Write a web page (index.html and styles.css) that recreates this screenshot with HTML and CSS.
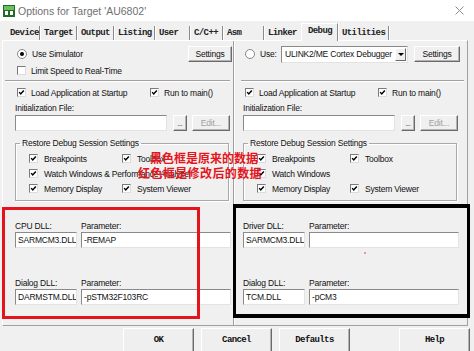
FILE: index.html
```html
<!DOCTYPE html>
<html lang="en">
<head>
    <meta charset="UTF-8">
    <title>Options for Target 'AU6802'</title>
    <link rel="stylesheet" href="styles.css">
</head>
<body>
    <div class="dialog">
        <div class="titlebar">
            <svg class="app-icon" viewBox="0 0 12 12">
                <rect width="12" height="12" fill="#1f6b2a"/>
                <rect x="1" y="1" width="10" height="4" fill="#6cbf5a"/>
                <rect x="2" y="6" width="3" height="4" fill="#fff"/>
                <rect x="7" y="6" width="3" height="4" fill="#fff"/>
            </svg>
            <span class="title">Options for Target 'AU6802'</span>
            <svg class="close" viewBox="0 0 9 9">
                <path d="M0.5 0.5 L8.5 8.5 M8.5 0.5 L0.5 8.5" stroke="#8c8c8c" stroke-width="1" fill="none"/>
            </svg>
        </div>

        <div class="tabs">
            <span class="tab">Device</span>
            <span class="tab">Target</span>
            <span class="tab">Output</span>
            <span class="tab">Listing</span>
            <span class="tab">User</span>
            <span class="tab">C/C++</span>
            <span class="tab">Asm</span>
            <span class="tab tab-before">Linker</span>
            <span class="tab tab-active">Debug</span>
            <span class="tab">Utilities</span>
        </div>

        <div class="panel">
            <div class="col col-left">
                <div class="row row-top">
                    <span class="opt"><span class="radio on"></span>Use Simulator</span>
                    <span class="btn btn-settings">Settings</span>
                </div>
                <div class="row">
                    <span class="opt"><span class="cb"></span>Limit Speed to Real-Time</span>
                </div>
                <div class="sep"></div>
                <div class="row pair">
                    <span class="opt"><span class="cb"><svg viewBox="0 0 9 9"><path d="M1.5 4 L3.5 6.3 L7.5 1.8"/></svg></span>Load Application at Startup</span>
                    <span class="opt"><span class="cb"><svg viewBox="0 0 9 9"><path d="M1.5 4 L3.5 6.3 L7.5 1.8"/></svg></span>Run to main()</span>
                </div>
                <div class="row">Initialization File:</div>
                <div class="file-row">
                    <span class="field file"></span>
                    <span class="btn btn-dots">...</span>
                    <span class="btn btn-edit">Edit...</span>
                </div>
                <fieldset class="group">
                    <legend>Restore Debug Session Settings</legend>
                    <div class="group-grid">
                        <span class="opt"><span class="cb"><svg viewBox="0 0 9 9"><path d="M1.5 4 L3.5 6.3 L7.5 1.8"/></svg></span>Breakpoints</span>
                        <span class="opt"><span class="cb"><svg viewBox="0 0 9 9"><path d="M1.5 4 L3.5 6.3 L7.5 1.8"/></svg></span>Toolbox</span>
                        <span class="opt wide"><span class="cb"><svg viewBox="0 0 9 9"><path d="M1.5 4 L3.5 6.3 L7.5 1.8"/></svg></span>Watch Windows &amp; Performance Analyzer</span>
                        <span class="opt"><span class="cb"><svg viewBox="0 0 9 9"><path d="M1.5 4 L3.5 6.3 L7.5 1.8"/></svg></span>Memory Display</span>
                        <span class="opt"><span class="cb"><svg viewBox="0 0 9 9"><path d="M1.5 4 L3.5 6.3 L7.5 1.8"/></svg></span>System Viewer</span>
                    </div>
                </fieldset>
                <div class="dll">
                    <span>CPU DLL:</span><span>Parameter:</span>
                    <span class="field">SARMCM3.DLL</span><span class="field">-REMAP</span>
                </div>
                <div class="dll dll-dialog">
                    <span>Dialog DLL:</span><span>Parameter:</span>
                    <span class="field">DARMSTM.DLL</span><span class="field">-pSTM32F103RC</span>
                </div>
            </div>

            <div class="col col-right">
                <div class="row row-top">
                    <span class="opt"><span class="radio"></span>Use:</span>
                    <span class="combo">ULINK2/ME Cortex Debugger<span class="combo-arrow"></span></span>
                    <span class="btn btn-settings">Settings</span>
                </div>
                <div class="row"></div>
                <div class="sep"></div>
                <div class="row pair">
                    <span class="opt"><span class="cb"><svg viewBox="0 0 9 9"><path d="M1.5 4 L3.5 6.3 L7.5 1.8"/></svg></span>Load Application at Startup</span>
                    <span class="opt"><span class="cb"><svg viewBox="0 0 9 9"><path d="M1.5 4 L3.5 6.3 L7.5 1.8"/></svg></span>Run to main()</span>
                </div>
                <div class="row">Initialization File:</div>
                <div class="file-row">
                    <span class="field file"></span>
                    <span class="btn btn-dots">...</span>
                    <span class="btn btn-edit">Edit...</span>
                </div>
                <fieldset class="group">
                    <legend>Restore Debug Session Settings</legend>
                    <div class="group-grid">
                        <span class="opt"><span class="cb"><svg viewBox="0 0 9 9"><path d="M1.5 4 L3.5 6.3 L7.5 1.8"/></svg></span>Breakpoints</span>
                        <span class="opt"><span class="cb"><svg viewBox="0 0 9 9"><path d="M1.5 4 L3.5 6.3 L7.5 1.8"/></svg></span>Toolbox</span>
                        <span class="opt wide"><span class="cb"><svg viewBox="0 0 9 9"><path d="M1.5 4 L3.5 6.3 L7.5 1.8"/></svg></span>Watch Windows</span>
                        <span class="opt"><span class="cb"><svg viewBox="0 0 9 9"><path d="M1.5 4 L3.5 6.3 L7.5 1.8"/></svg></span>Memory Display</span>
                        <span class="opt"><span class="cb"><svg viewBox="0 0 9 9"><path d="M1.5 4 L3.5 6.3 L7.5 1.8"/></svg></span>System Viewer</span>
                    </div>
                </fieldset>
                <div class="dll">
                    <span>Driver DLL:</span><span>Parameter:</span>
                    <span class="field">SARMCM3.DLL</span><span class="field"></span>
                </div>
                <div class="dll dll-dialog">
                    <span>Dialog DLL:</span><span>Parameter:</span>
                    <span class="field">TCM.DLL</span><span class="field">-pCM3</span>
                </div>
            </div>
        </div>

        <div class="buttons">
            <span class="btn-main">OK</span>
            <span class="btn-main">Cancel</span>
            <span class="btn-main">Defaults</span>
            <span class="btn-main btn-help">Help</span>
        </div>

        <!-- annotations drawn over the dialog -->
        <div class="mark mark-red"></div>
        <div class="mark mark-black"></div>
        <span class="note note-black">黑色框是原来的数据</span>
        <span class="note note-red">红色框是修改后的数据</span>
        <span class="dot"></span>
    </div>
</body>
</html>
```

FILE: styles.css
```css
* {
    box-sizing: border-box;
}
body {
    margin: 0;
    width: 474px;
    height: 351px;
    overflow: hidden;
    background-color: #f0f0f0;
    font-family: "Liberation Sans", Arial, sans-serif;
    font-size: 8.5px;
    letter-spacing: -0.2px;
    color: #111;
}
.dialog {
    position: relative;
    width: 474px;
    height: 351px;
}

/* title bar */
.titlebar {
    height: 21px;
    background-color: #fff;
    display: flex;
    align-items: center;
    padding: 0 10px 0 3px;
}
.app-icon {
    width: 12px;
    height: 12px;
    margin-right: 3px;
}
.title {
    flex: 1;
    font-size: 10.5px;
    letter-spacing: 0;
    color: #707070;
}
.close {
    width: 9px;
    height: 9px;
}

/* tab strip */
.tabs {
    display: grid;
    grid-template-columns: 34px 37px 37px 41px 35px 33px 41px 37px 37px 51px;
    align-items: end;
    height: 19px;
    padding-left: 6px;
    font-family: "Liberation Mono", monospace;
    font-size: 9px;
    font-weight: bold;
    letter-spacing: -0.6px;
    color: #222;
}
.tab {
    height: 14px;
    line-height: 14px;
    padding-left: 4px;
    border-right: 1px solid #8a8a8a;
    box-shadow: 1px 0 0 #fff;
    white-space: nowrap;
}
.tab-before {
    border-right: none;
    box-shadow: none;
}
.tab-active {
    height: 18px;
    line-height: 14px;
    padding-left: 6px;
    margin-bottom: -1px;
    background-color: #f0f0f0;
    border-left: 1px solid #fff;
    border-top: 1px solid #fff;
}

/* main page of the tab */
.panel {
    display: flex;
    height: 286px;
    margin: 0 6px 0 2px;
    border-top: 1px solid #fff;
    border-left: 1px solid #fff;
    border-right: 1px solid #a0a0a0;
    border-bottom: 1px solid #a0a0a0;
}
.col {
    display: flex;
    flex-direction: column;
    padding-top: 4px;
}
.col-left {
    width: 231px;
    padding-left: 12px;
    padding-right: 1px;
    border-right: 1px solid #a0a0a0;
    box-shadow: 1px 0 0 #fff;
}
.col-right {
    flex: 1;
    padding-left: 9px;
    padding-right: 7px;
}
.row {
    height: 15px;
    display: flex;
    align-items: center;
    white-space: nowrap;
}
.row-top {
    height: 18px;
    justify-content: space-between;
}
.pair {
    display: grid;
    grid-template-columns: 133px 1fr;
    margin-top: 3px;
}
.opt {
    display: flex;
    align-items: center;
    white-space: nowrap;
}
.sep {
    height: 2px;
    margin: 2px 2px 0 -10px;
    border-top: 1px solid #a0a0a0;
    border-bottom: 1px solid #fff;
}
.col-right .sep {
    margin: 2px -4px 0 -2px;
}

/* check boxes and radios */
.cb {
    width: 9px;
    height: 9px;
    margin: 0 5px 0 2px;
    background-color: #fff;
    border: 1px solid;
    border-color: #7a7a7a #dcdcdc #dcdcdc #7a7a7a;
    display: flex;
}
.cb svg {
    width: 7px;
    height: 7px;
}
.cb path {
    fill: none;
    stroke: #000;
    stroke-width: 1.9;
}
.radio {
    width: 10px;
    height: 10px;
    margin: 0 5px 0 2px;
    border-radius: 50%;
    background-color: #fff;
    border: 1px solid #8a8a8a;
    display: flex;
    align-items: center;
    justify-content: center;
}
.radio.on::after {
    content: '';
    width: 4px;
    height: 4px;
    border-radius: 50%;
    background-color: #000;
}

/* buttons and fields */
.btn {
    height: 16px;
    display: flex;
    align-items: center;
    justify-content: center;
    background-color: #f0f0f0;
    border: 1px solid;
    border-color: #fff #6a6a6a #6a6a6a #fff;
    box-shadow: inset -1px -1px 0 #b4b4b4;
}
.btn-settings {
    width: 44px;
}
.col-right .btn-settings {
    width: 46px;
    margin-left: 6px;
}
.btn-dots {
    width: 14px;
    margin-left: 6px;
    font-size: 7px;
}
.btn-edit {
    width: 38px;
    margin-left: 5px;
    color: #a0a0a0;
}
.field {
    height: 16px;
    line-height: 14px;
    padding: 0 2px;
    background-color: #fff;
    border: 1px solid;
    border-color: #8a8a8a #e3e3e3 #e3e3e3 #8a8a8a;
    white-space: nowrap;
    overflow: hidden;
}
.file-row {
    display: flex;
    height: 16px;
}
.file {
    width: 152px;
}
.combo {
    width: 127px;
    height: 17px;
    margin-left: auto;
    display: flex;
    align-items: center;
    padding-left: 3px;
    background-color: #fff;
    border: 1px solid;
    border-color: #8a8a8a #e3e3e3 #e3e3e3 #8a8a8a;
    white-space: nowrap;
}
.combo-arrow {
    width: 11px;
    height: 13px;
    margin-left: auto;
    margin-right: 1px;
    background-color: #f0f0f0;
    border: 1px solid;
    border-color: #fff #6a6a6a #6a6a6a #fff;
    display: flex;
    align-items: center;
    justify-content: center;
}
.combo-arrow::after {
    content: '';
    border-left: 3px solid transparent;
    border-right: 3px solid transparent;
    border-top: 3px solid #000;
}

/* group box */
.group {
    width: 214px;
    margin: 6px 0 0 0;
    padding: 2px 0 4px 11px;
    border: 1px solid #a9a9a9;
    box-shadow: inset 1px 1px 0 #fff, 1px 1px 0 #fff;
}
.group legend {
    margin-left: -7px;
    padding: 0 2px;
    line-height: 12px;
}
.group-grid {
    display: grid;
    grid-template-columns: 93px 1fr;
    grid-auto-rows: 15px;
    align-items: center;
}
.group .cb {
    margin-right: 6px;
}
.wide {
    grid-column: span 2;
}

/* dll settings */
.dll {
    display: grid;
    grid-template-columns: 62px 150px;
    grid-template-rows: 12px 16px;
    column-gap: 4px;
    align-items: center;
    margin-top: 19px;
}
.dll-dialog {
    margin-top: 29px;
}

/* bottom buttons */
.buttons {
    display: flex;
    gap: 7px;
    margin-top: 2px;
    padding: 0 4px 0 123px;
    font-family: "Liberation Mono", monospace;
    font-size: 9px;
    font-weight: bold;
    letter-spacing: -0.6px;
}
.btn-main {
    width: 71px;
    height: 23px;
    display: flex;
    align-items: center;
    justify-content: center;
    background-color: #efefef;
    border-top: 1px solid #fff;
    border-left: 1px solid #fff;
    border-right: 1px solid #6a6a6a;
    box-shadow: inset -1px 0 0 #b4b4b4;
}
.btn-help {
    margin-left: auto;
}

/* annotations */
.mark {
    position: absolute;
    border-style: solid;
}
.mark-red {
    left: 2px;
    top: 207px;
    width: 198px;
    height: 112px;
    border-width: 3px;
    border-color: #e3141c;
}
.mark-black {
    left: 233px;
    top: 204px;
    width: 237px;
    height: 114px;
    border-width: 4px 3px 4px 3px;
    border-color: #000;
}
.note {
    position: absolute;
    font-family: "Noto Sans CJK SC", sans-serif;
    font-size: 12px;
    font-weight: bold;
    line-height: 15px;
    letter-spacing: 0;
    color: #e6141b;
    white-space: nowrap;
}
.note-black {
    left: 150px;
    top: 150px;
}
.note-red {
    left: 138px;
    top: 165px;
    letter-spacing: 0.4px;
}
.dot {
    position: absolute;
    left: 364px;
    top: 252px;
    width: 2px;
    height: 2px;
    background-color: #e89a9a;
}
```
